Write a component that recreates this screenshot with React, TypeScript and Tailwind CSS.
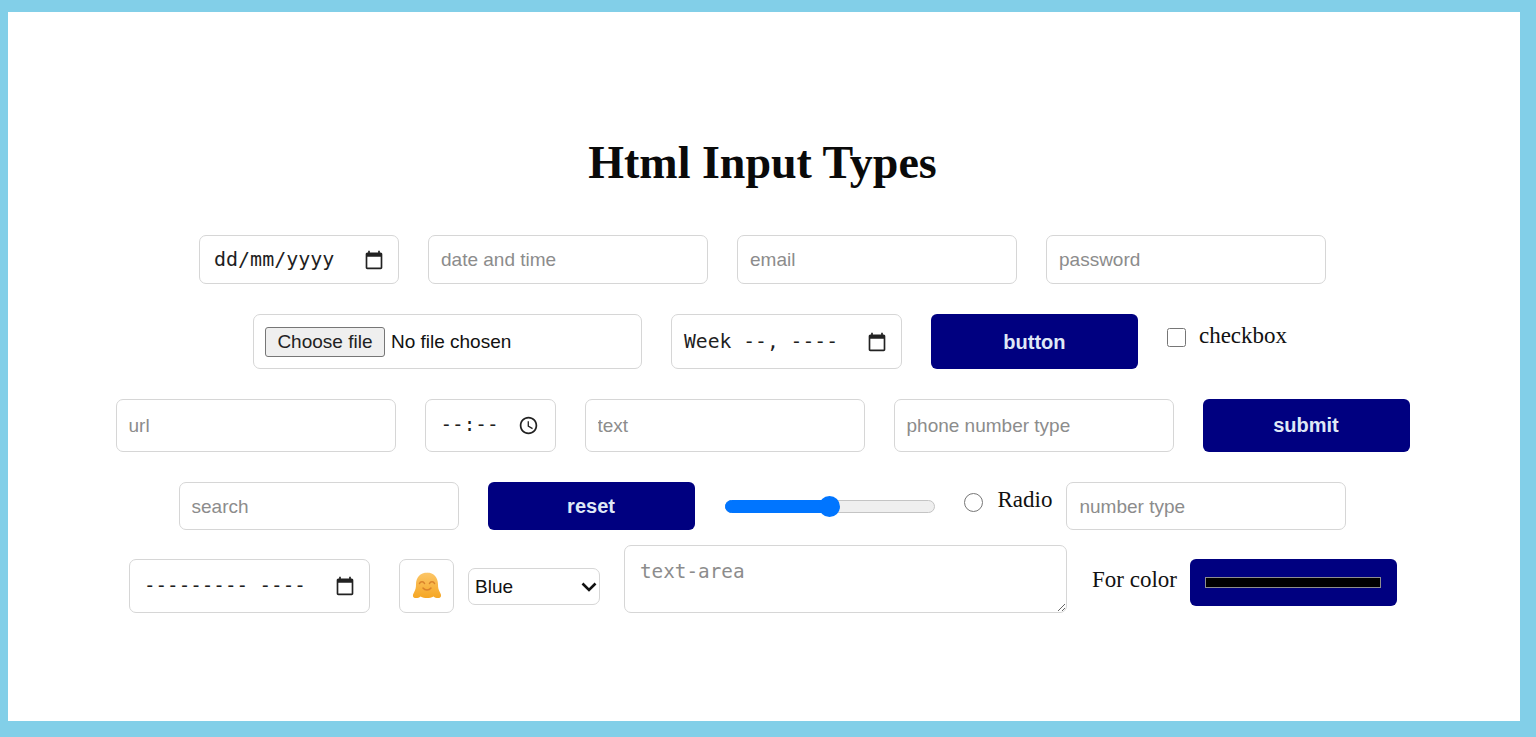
import React from "react";

const box = "border-[1.5px] border-[#d6d6d6] rounded-[7px] bg-white";
const textInput = `${box} w-[280px] px-3 pt-px text-[19px] font-['Liberation_Sans',sans-serif] text-black placeholder:text-[#8c8c8c] outline-none`;
const navy = "w-[207px] rounded-[6px] bg-[#000080] text-[#dfe8f6] font-bold text-[20px] font-['Liberation_Sans',sans-serif] flex items-center justify-center";
const mono = "font-['DejaVu_Sans_Mono',monospace] text-[#1f1f1f]";
const serif = "font-['Liberation_Serif',serif] text-[23px] text-[#111]";

const Calendar = () => (
  <svg width="20" height="20" viewBox="0 0 24 24" fill="#222" className="shrink-0">
    <path d="M20 3h-1V1h-2v2H7V1H5v2H4c-1.1 0-2 .9-2 2v16c0 1.1.9 2 2 2h16c1.1 0 2-.9 2-2V5c0-1.1-.9-2-2-2zm0 18H4V8h16v13z" />
  </svg>
);

const Clock = () => (
  <svg width="21" height="21" viewBox="0 0 24 24" fill="#222" className="shrink-0">
    <path d="M11.99 2C6.47 2 2 6.48 2 12s4.47 10 9.99 10C17.52 22 22 17.52 22 12S17.52 2 11.99 2zM12 20c-4.42 0-8-3.58-8-8s3.58-8 8-8 8 3.58 8 8-3.58 8-8 8zm.5-13H11v6l5.25 3.15.75-1.23-4.5-2.67z" />
  </svg>
);

const Hug = () => (
  <svg width="32" height="32" viewBox="0 0 32 32">
    <defs>
      <linearGradient id="hug" x1="0" y1="0" x2="0" y2="1">
        <stop offset="0" stopColor="#fcc668" />
        <stop offset="1" stopColor="#f5a623" />
      </linearGradient>
    </defs>
    <path d="M16 2.500c7 0 11 5 11 12 0 3 .5 5.500 2 8 1.500 2.300 1.500 5-1 5.500-2 .4-4-.3-5.500-1.500-2 1-4.300 1.500-6.500 1.500s-4.500-.5-6.500-1.500c-1.500 1.200-3.500 1.900-5.500 1.500-2.500-.5-2.500-3.200-1-5.500 1.500-2.500 2-5 2-8 0-7 4-12 11.500-12z" fill="url(#hug)" />
    <path d="M8.500 13.500c1-2.300 4-2.300 5 0M18.500 13.500c1-2.300 4-2.300 5 0M12 18c2 2.800 6 2.800 8 0" fill="none" stroke="#d9822b" strokeWidth="1.500" strokeLinecap="round" />
  </svg>
);

export default function App() {
  return (
    <div className="w-full h-[737px] bg-[#82cfe8] pl-[8px] pr-[16px] pt-[12px] pb-[16px]">
      <div className="h-full bg-white pr-[3px] flex flex-col items-center">
        <h1 className="mt-[125px] h-[52px] leading-[52px] font-['Liberation_Serif',serif] font-bold text-[46px] text-[#0a0a0a]">
          Html Input Types
        </h1>
        <div className="mt-[46px] flex flex-col gap-[30px] items-center">
          <div className="flex gap-[29px] h-[49px]">
            <div className={`${box} w-[200px] pl-[14px] pr-[14px] flex items-center justify-between`}>
              <span className={`${mono} text-[20px] mb-[2px]`}>dd/mm/yyyy</span>
              <Calendar />
            </div>
            <input type="text" placeholder="date and time" className={textInput} />
            <input type="email" placeholder="email" className={textInput} />
            <input type="password" placeholder="password" className={textInput} />
          </div>

          <div className="flex gap-[29px] h-[55px] ml-[15px]">
            <div className={`${box} w-[389px] pl-[11px] flex items-center text-[19px] font-['Liberation_Sans',sans-serif]`}>
              <button type="button" className="w-[120px] h-[30px] mr-[6px] bg-[#efefef] border border-[#767676] rounded-[3px] text-[#222]">
                Choose file
              </button>
              <span className="text-[#111] pt-px">No file chosen</span>
            </div>
            <div className={`${box} w-[231px] pl-[12px] pr-[14px] flex items-center justify-between`}>
              <span className={`${mono} text-[19.700px]`}>Week --, ----</span>
              <Calendar />
            </div>
            <div className={navy}>button</div>
            <label className="flex items-start gap-[13px] -mt-px">
              <input type="checkbox" className="w-[19px] h-[19px] mt-[15px]" />
              <span className={`${serif} mt-[6px]`}>checkbox</span>
            </label>
          </div>

          <div className="flex gap-[29px] h-[53px]">
            <input type="url" placeholder="url" className={textInput} />
            <div className={`${box} w-[131px] pl-[15px] pr-[16px] flex items-center justify-between`}>
              <span className={`${mono} text-[19.300px]`}>--:--</span>
              <Clock />
            </div>
            <input type="text" placeholder="text" className={textInput} />
            <input type="tel" placeholder="phone number type" className={textInput} />
            <div className={`${navy} pb-px`}>submit</div>
          </div>

          <div className="flex h-[48px] items-center">
            <input type="search" placeholder="search" className={`${textInput} h-full`} />
            <div className={`${navy} h-full ml-[29px]`}>reset</div>
            <div className="relative w-[210px] h-[13px] ml-[30px] rounded-full bg-[#efefef] border border-[#c4c4c4]">
              <div className="h-full w-[104px] -mt-px -ml-px box-content border border-[#0075ff] rounded-full bg-[#0075ff]" />
              <div className="absolute left-[93px] -top-[5px] w-[21px] h-[21px] rounded-full bg-[#0075ff]" />
            </div>
            <input type="radio" className="w-[19px] h-[19px] ml-[29px] mt-[-8px]" />
            <span className={`${serif} ml-[15px] mt-[-12px]`}>Radio</span>
            <input type="number" placeholder="number type" className={`${textInput} h-full ml-[14px] appearance-none`} />
          </div>

          <div className="flex items-start -mt-[15px] ml-[1px]">
            <div className={`${box} w-[241px] h-[54px] mt-[14px] pl-[14px] pr-[14px] flex items-center justify-between`}>
              <span className={`${mono} text-[19.200px]`}>--------- ----</span>
              <Calendar />
            </div>
            <div className={`${box} w-[55px] h-[54px] mt-[14px] ml-[29px] flex items-center justify-center`}>
              <Hug />
            </div>
            <div className="relative w-[132px] h-[37px] mt-[23px] ml-[14px]">
              <select className="w-full h-full appearance-none pl-[6px] pt-px border-[1.5px] border-[#d6d6d6] rounded-[7px] bg-white text-[19px] text-[#111] font-['Liberation_Sans',sans-serif]">
                <option>Blue</option>
              </select>
              <svg width="16" height="10" viewBox="0 0 16 10" className="absolute right-[3px] top-[14px] pointer-events-none">
                <path d="M1.500 1.500L8 8l6.500-6.500" fill="none" stroke="#111" strokeWidth="2.600" />
              </svg>
            </div>
            <textarea
              placeholder="text-area"
              className={`${box} w-[443px] h-[68px] ml-[24px] px-[15px] pt-[14px] text-[19.300px] leading-[24px] font-['DejaVu_Sans_Mono',monospace] placeholder:text-[#8c8c8c] outline-none`}
            />
            <span className={`${serif} ml-[25px] mt-[18px]`}>For color</span>
            <div className="w-[207px] h-[47px] mt-[14px] ml-[13px] rounded-[6px] bg-[#000080] flex items-center justify-center">
              <div className="w-[176px] h-[11px] bg-black border border-[#8e8e8e]" />
            </div>
          </div>
        </div>
      </div>
    </div>
  );
}
